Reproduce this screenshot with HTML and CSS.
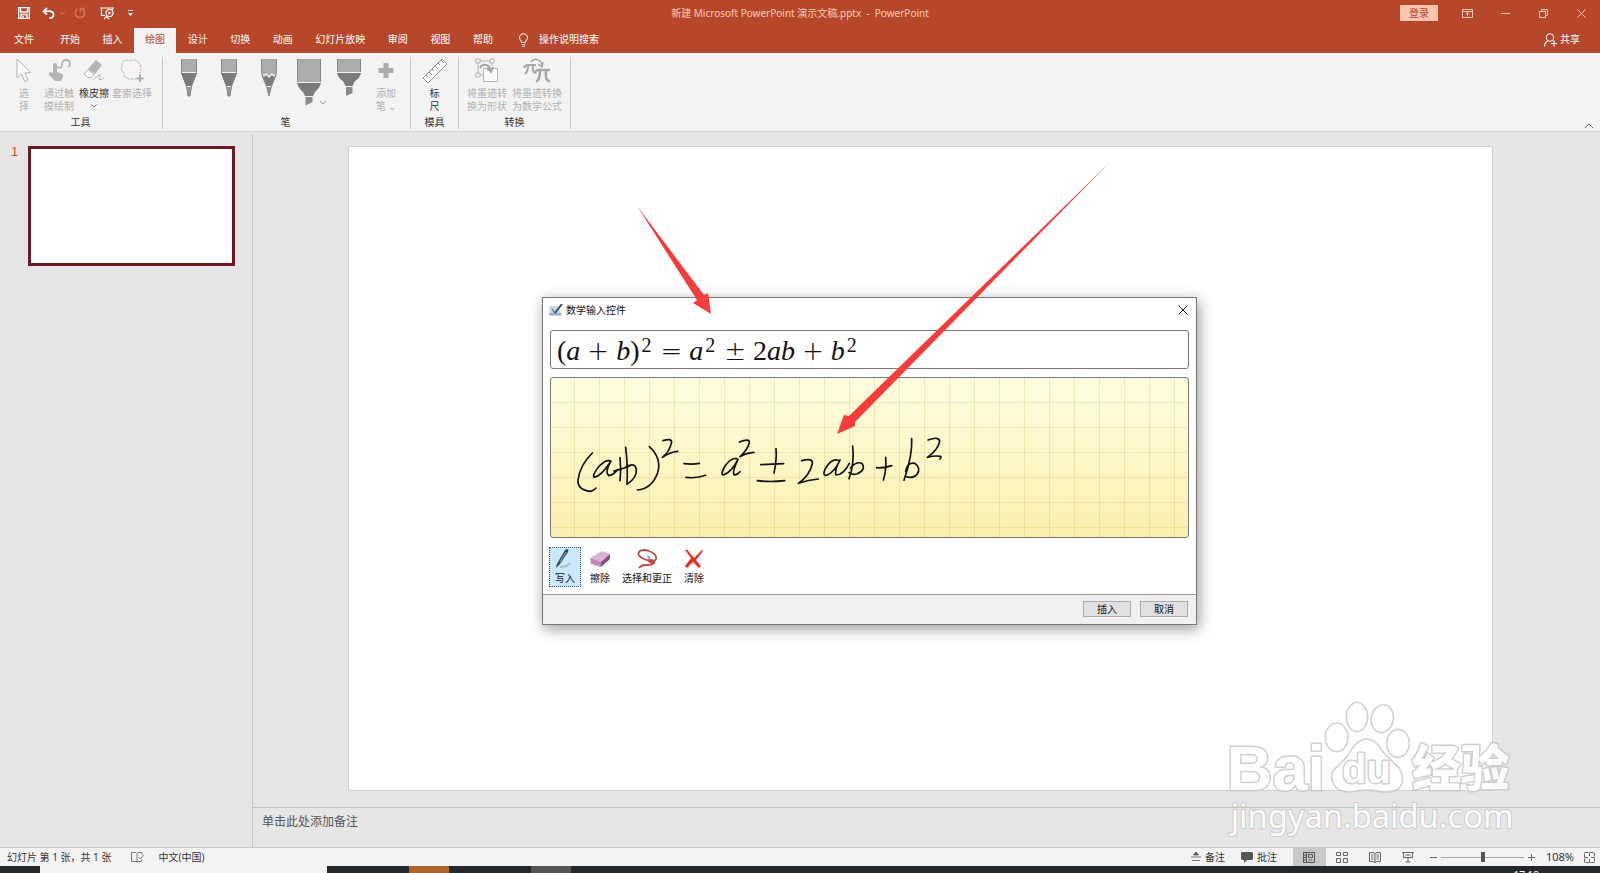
FILE: index.html
```
<!DOCTYPE html>
<html lang="zh-CN">
<head>
    <meta charset="UTF-8">
    <title>新建 Microsoft PowerPoint 演示文稿.pptx - PowerPoint</title>
    <link rel="stylesheet" href="styles.css">
</head>

<body>
<header class="top">
    <div class="titlebar">
        <div class="quick">
            <button aria-label="保存"><svg width="12" height="12" viewBox="0 0 12 12"><path d="M.7.7h10.6v10.6H.7zM2.5 1v4h7V1M3 11V7.5h6V11M5 9v2" fill="none" stroke="#fff" stroke-width="1.3"/></svg></button>
            <button aria-label="撤消"><svg width="24" height="12" viewBox="0 0 24 12"><path d="M5 1L1.5 4.200 5 7.500M2 4.200h5.500q4 .3 4 3.500 0 3-4 3.500" fill="none" stroke="#fff" stroke-width="1.800"/><path d="M18 5l2.300 2.200L22.600 5" fill="none" stroke="#e08f78"/></svg></button>
            <button aria-label="恢复"><svg width="12" height="12" viewBox="0 0 12 12"><path d="M3.500 2A4.700 4.700 0 1 0 8.500 2M6.500 5V1.500h4" fill="none" stroke="#d4745c" stroke-width="1.500"/></svg></button>
            <button aria-label="从头开始"><svg width="15" height="13" viewBox="0 0 15 13"><path d="M0 1h14M1.500 1v7.500H5M12.500 1v2M4 12l2.500-2.500L9 12" fill="none" stroke="#fff" stroke-width="1.200"/><circle cx="9.500" cy="6" r="3.600" fill="none" stroke="#fff" stroke-width="1.200"/><path d="M8.500 4.200v3.600l3-1.800z" fill="#fff"/></svg></button>
            <button aria-label="自定义快速访问工具栏"><svg width="7" height="8" viewBox="0 0 7 8"><path d="M1 1.500h5" stroke="#fff"/><path d="M1 4h5L3.500 7z" fill="#fff"/></svg></button>
        </div>
        <div class="doc-name">新建 Microsoft PowerPoint 演示文稿.pptx &nbsp;-&nbsp; PowerPoint</div>
        <div class="window-buttons">
            <button class="login">登录</button>
            <button class="win" aria-label="功能区显示选项"><svg width="11" height="9" viewBox="0 0 11 9"><path d="M.5.5h10v8H.5zM.5 2.500h10M5.500 7.500v-4M3.500 5.300l2-1.800 2 1.800" fill="none" stroke="#f7c8b8"/></svg></button>
            <button class="win" aria-label="最小化"><svg width="9" height="9" viewBox="0 0 9 9"><path d="M0 4.500h9" stroke="#f7c8b8"/></svg></button>
            <button class="win" aria-label="还原"><svg width="9" height="9" viewBox="0 0 9 9"><path d="M.5 2.500h6v6h-6zM2.500 2.500v-2h6v6h-2" fill="none" stroke="#f7c8b8"/></svg></button>
            <button class="win" aria-label="关闭"><svg width="9" height="9" viewBox="0 0 9 9"><path d="M.5.5l8 8M8.500.5l-8 8" stroke="#f7c8b8"/></svg></button>
        </div>
    </div>

    <nav class="tabs">
        <a class="file" href="#">文件</a>
        <div class="tab-list">
            <a href="#">开始</a>
            <a href="#">插入</a>
            <a class="active" href="#">绘图</a>
            <a href="#">设计</a>
            <a href="#">切换</a>
            <a href="#">动画</a>
            <a href="#">幻灯片放映</a>
            <a href="#">审阅</a>
            <a href="#">视图</a>
            <a href="#">帮助</a>
        </div>
        <a class="tell" href="#"><svg width="11" height="14" viewBox="0 0 11 14"><path d="M3.500 9.500Q3.500 8 2.200 6.800A4 4 0 1 1 8.800 6.800Q7.500 8 7.500 9.500zM3.700 11.500h3.600M4.200 13.300h2.600" fill="none" stroke="#fff"/></svg>操作说明搜索</a>
        <a class="share" href="#"><svg width="13" height="14" viewBox="0 0 13 14"><circle cx="6" cy="4.500" r="3.800" fill="none" stroke="#fff"/><path d="M.5 13.500Q.8 9 4 8M10 7.500v6M7 10.500h6" fill="none" stroke="#fff" stroke-width="1.200"/></svg>共享</a>
    </nav>
</header>

<section class="ribbon">
    <div class="group tools">
        <div class="items">
            <button class="item off"><svg width="18" height="26" viewBox="0 0 18 26"><path d="M2 1v19l4.500-4 3.200 7.500 3.300-1.500-3.200-7 6-.5z" fill="#fafafa" stroke="#b4b4b4"/></svg>选<br>择</button>
            <button class="item off"><svg width="24" height="26" viewBox="0 0 24 26"><path d="M9 8q5 4 6-1 0-5 4-5 4 0 4 4 0 2-2 3" fill="none" stroke="#b4b4b4" stroke-width="1.800"/><path d="M6 7q0-2 2-2t2 2v7l5 2q2 1 1 3l-2 4H8l-6-6q-1-3 2-3l2 1z" fill="#b4b4b4"/></svg>通过触<br>摸绘制</button>
            <button class="item"><svg width="24" height="26" viewBox="0 0 24 26"><path d="M14 2l6 5-7 9-7-5z" fill="#b4b4b4"/><path d="M6 11.500l6 5-2.500 3H6l-4-3.500z" fill="#fafafa" stroke="#b4b4b4"/><path d="M11 22q6-6 7-5 .5 2-1 4 2 2 5-1" fill="none" stroke="#b4b4b4"/></svg>橡皮擦<svg class="caret" width="6" height="4" viewBox="0 0 6 4"><path d="M.5.5L3 3 5.500.5" fill="none" stroke="#777"/></svg></button>
            <button class="item off"><svg width="24" height="26" viewBox="0 0 24 26"><path d="M19 17q4-7 0-12Q15 0 11 3 1 0 2 9q-2 2 2 6 0 6 8 6h4" fill="#f8f3f8" stroke="#b4b4b4" stroke-dasharray="3 1"/><path d="M20 17v7M16.500 20.500h7" stroke="#a6a6a6" stroke-width="1.800"/></svg>套索选择</button>
        </div>
        <div class="caption">工具</div>
    </div>

    <div class="group pens">
        <div class="items">
            <button class="pen" aria-label="钢笔 1"><svg width="16" height="38" viewBox="0 0 16 38"><path d="M0 0h16v13H0z" fill="#acacac"/><path d="M0 14h16l-5 13H5z" fill="#7b7b7b"/><path d="M5.500 28h5L9 37H7z" fill="#999"/><path d="M.5 0v14l5 13L7 37h2l1.500-10 5-13V0" fill="none" stroke="#858585"/></svg></button>
            <button class="pen" aria-label="钢笔 2"><svg width="16" height="38" viewBox="0 0 16 38"><path d="M0 0h16v13H0z" fill="#acacac"/><path d="M0 14h16l-5 13H5z" fill="#7b7b7b"/><path d="M5.500 28h5L9 37H7z" fill="#999"/><path d="M.5 0v14l5 13L7 37h2l1.500-10 5-13V0" fill="none" stroke="#858585"/></svg></button>
            <button class="pen" aria-label="铅笔"><svg width="16" height="38" viewBox="0 0 16 38"><path d="M0 0h16v14l-3 2-2-2-3 3-3-3-2 2-3-2z" fill="#acacac"/><path d="M0 15l3 3 2-2 3 3 3-3 2 2 3-3-5 12H5z" fill="#7b7b7b"/><path d="M5.500 28h5L8 38z" fill="#8e8e8e"/><path d="M.5 0v14l5 13L8 37l2.500-10 5-13V0" fill="none" stroke="#8c8c8c"/></svg></button>
            <button class="pen" aria-label="荧光笔 1"><svg width="34" height="48" viewBox="0 0 34 48"><path d="M5 0h24v23H5z" fill="#acacac"/><path d="M5 24h24q-2 6-6 9l-2 4h-8l-2-4q-4-3-6-9z" fill="#7b7b7b"/><path d="M13.500 38h7v5l-7 3.500z" fill="#8a8a8a"/><path d="M5.500 0v23M28.500 0v23" stroke="#858585"/><path d="M28 42l3 3 3-3" fill="none" stroke="#999"/></svg></button>
            <button class="pen" aria-label="荧光笔 2"><svg width="24" height="38" viewBox="0 0 24 38"><path d="M0 0h24v13H0z" fill="#acacac"/><path d="M0 14h24q-1 5-6 8l-2.500 5h-7L6 22q-5-3-6-8z" fill="#7b7b7b"/><path d="M9 28h6.500v6L9 37z" fill="#8a8a8a"/><path d="M.5 0v13M23.500 0v13" stroke="#858585"/></svg></button>
            <button class="item off"><svg width="16" height="26" viewBox="0 0 16 26"><path d="M5.500 5h5v5h5v5h-5v5h-5v-5h-5v-5h5z" fill="#acacac"/></svg>添加<br>笔 ⌄</button>
        </div>
        <div class="caption">笔</div>
    </div>

    <div class="group stencil">
        <div class="items">
            <button class="item"><svg width="26" height="26" viewBox="0 0 26 26"><path d="M1 20L20 1l5 5L6 25zM4 17l2 2M7 14l3 3M10 11l2 2M13 8l3 3M16 5l2 2M19 2l3 3" fill="#fff" stroke="#8c8c8c"/></svg>标<br>尺</button>
        </div>
        <div class="caption">模具</div>
    </div>

    <div class="group convert">
        <div class="items">
            <button class="item off"><svg width="24" height="26" viewBox="0 0 24 26"><path d="M8 17H3V3h14v5" fill="none" stroke="#b4b4b4"/><path d="M1 1h4v4H1zM15 1h4v4h-4zM1 15h4v4H1z" fill="#f3f3f3" stroke="#b4b4b4"/><path d="M8.500 10.500h14v13h-14z" fill="#fafafa" stroke="#b4b4b4"/><path d="M5 10q2-4 6-3 4 1 5 6M12 10l4 4 2-5" fill="none" stroke="#a6a6a6" stroke-width="2"/></svg>将墨迹转<br>换为形状</button>
            <button class="item off"><svg width="28" height="26" viewBox="0 0 28 26"><path d="M1 10q1-3 4-3h8M5 7q0 7-3 9M10 7q-1 8 3 8" fill="none" stroke="#a6a6a6" stroke-width="2"/><path d="M12 15q1-3 4-3h11M17 12q0 10-4 12M23 12q-1 12 4 11" fill="none" stroke="#a6a6a6" stroke-width="2.500"/><path d="M8 4q3-4 7-2 4 1 4 7M15 6l4 3 1-5" fill="none" stroke="#a6a6a6" stroke-width="1.500"/></svg>将墨迹转换<br>为数学公式</button>
        </div>
        <div class="caption">转换</div>
    </div>
    <button class="collapse" aria-label="折叠功能区"><svg width="10" height="6" viewBox="0 0 10 6"><path d="M1 5l4-4 4 4" fill="none" stroke="#666"/></svg></button>
</section>

<main class="workspace">
    <aside class="slides">
        <span class="number">1</span>
        <button class="thumb" aria-label="幻灯片 1"></button>
    </aside>
    <div class="editor">
        <div class="slide"></div>
        <div class="notes">单击此处添加备注</div>
    </div>
</main>

<footer class="status">
    <span>幻灯片 第 1 张，共 1 张</span>
    <button class="spell" aria-label="拼写检查"><svg width="13" height="11" viewBox="0 0 13 11"><path d="M6 2v8.500M6 9.500H.5v-9H5l1 1 1-1h4v2M6 9.500h4l1-2M7.500 5l2 2 3-4" fill="none" stroke="#777"/></svg></button>
    <span>中文(中国)</span>
    <div class="status-right">
        <button class="label-button"><svg width="10" height="10" viewBox="0 0 10 10"><path d="M5 0l2.500 3h-5zM0 5h10M1 8.500h8" fill="#555" stroke="#555" stroke-width=".8"/></svg>备注</button>
        <button class="label-button"><svg width="12" height="11" viewBox="0 0 12 11"><path d="M1 0h10l1 1v6l-1 1H6l-3 3V8H1L0 7V1z" fill="#555"/></svg>批注</button>
        <div class="views">
            <button class="selected" aria-label="普通视图"><svg width="12" height="11" viewBox="0 0 12 11"><path d="M.5.5h11v10H.5zM3.500.5v10M5.500 2.500h4v3h-4zM5.500 8h4M1 3h2M1 5.500h2M1 8h2" fill="none" stroke="#555"/></svg></button>
            <button aria-label="幻灯片浏览"><svg width="12" height="11" viewBox="0 0 12 11"><path d="M.5.5h4v3h-4zM7.500.5h4v3h-4zM.5 6.500h4v4h-4zM7.500 6.500h4v4h-4z" fill="none" stroke="#666"/></svg></button>
            <button aria-label="阅读视图"><svg width="12" height="11" viewBox="0 0 12 11"><path d="M.5.5H4l2 1 2-1h3.500v9H8l-2 1-2-1H.5zM6 1.500v9M2 3h2.500M2 5h2.500M2 7h2.500M7.500 3H10M7.500 5H10M7.500 7H10" fill="none" stroke="#666"/></svg></button>
            <button aria-label="幻灯片放映"><svg width="12" height="11" viewBox="0 0 12 11"><path d="M0 .5h12M1.500 .5v5h9v-5M6 5.500v4M3.500 10h5M3.500 3h5" fill="none" stroke="#666"/></svg></button>
        </div>
        <button class="zoom-step" aria-label="缩小"><svg width="7" height="7" viewBox="0 0 7 7"><path d="M0 3.500h7" stroke="#666"/></svg></button>
        <input class="zoom" type="range" min="0" max="100" value="51" aria-label="缩放">
        <button class="zoom-step" aria-label="放大"><svg width="7" height="7" viewBox="0 0 7 7"><path d="M0 3.500h7M3.500 0v7" stroke="#666"/></svg></button>
        <span class="percent">108%</span>
        <button class="fit" aria-label="适应窗口"><svg width="11" height="11" viewBox="0 0 11 11"><path d="M.5.5h10v10H.5zM5.500 1v3M5.500 7v3M1 5.500h3M7 5.500h3" fill="none" stroke="#666" stroke-dasharray="4 1"/></svg></button>
    </div>
</footer>

<div class="taskbar">
    <input class="search" type="text" aria-label="搜索">
    <button class="app orange" aria-label="应用 1"></button>
    <button class="app gray" aria-label="应用 2"></button>
    <span class="clock">17:18</span>
</div>

<div class="dialog" role="dialog" aria-labelledby="dialogTitle">
    <div class="dialog-title">
        <svg width="14" height="12" viewBox="0 0 14 12"><path d="M0 2h9l4 9H1z" fill="#c3d9e6"/><path d="M0 9h12v2.500H0z" fill="#8fb0c4"/><path d="M3 5l3 4" fill="none" stroke="#4d6575" stroke-width="1.200"/><path d="M6 9l7-9" stroke="#33434f" stroke-width="1.800"/></svg>
        <span id="dialogTitle">数学输入控件</span>
        <button aria-label="关闭"><svg width="10" height="10" viewBox="0 0 10 10"><path d="M.5.5l9 9M9.500.5l-9 9" stroke="#222"/></svg></button>
    </div>
    <div class="formula">(<i>a</i><span class="op">+</span><i>b</i>)<sup>2</sup><span class="op">=</span><i>a</i><sup>2</sup><span class="op">±</span>2<i>ab</i><span class="op">+</span><i>b</i><sup>2</sup></div>
    <div class="canvas">
        <svg width="400" height="159" viewBox="63 264 1200 477" fill="none" stroke="#111" stroke-width="5" stroke-linecap="round" stroke-linejoin="round">
            <path d="M187 489Q150 525 144 570Q142 600 182 604Q195 600 198 594"/>
            <path d="M243 514Q230 506 208 528Q185 556 192 562Q212 560 241 516Q224 548 236 557Q248 556 264 538"/>
            <path d="M270 503Q274 540 270 572M252 543Q285 534 300 527"/>
            <path d="M287 472Q294 525 291 583Q322 562 319 538Q316 516 288 530"/>
            <path d="M358 470Q396 505 383 548Q366 596 322 600"/>
            <path d="M399 452Q429 443 424 460Q418 485 397 502Q420 486 443 484"/>
            <path d="M462 521Q490 524 508 520M468 562Q500 566 527 556"/>
            <path d="M620 506Q604 502 585 528Q570 555 580 555Q606 545 624 508Q606 545 612 554Q620 557 630 545"/>
            <path d="M628 456Q660 444 658 458Q652 480 630 500Q650 488 672 487"/>
            <path d="M692 524L761 521M738 476Q741 515 732 549M682 572Q720 577 764 572"/>
            <path d="M815 512Q850 502 847 522Q838 558 805 580Q835 570 865 567"/>
            <path d="M925 511Q905 504 886 536Q876 558 890 556Q914 546 930 510Q912 542 918 555Q940 555 958 520"/>
            <path d="M968 468Q974 520 957 566M962 534Q978 513 996 520Q1009 540 980 552Q968 556 957 548"/>
            <path d="M1040 533Q1060 535 1085 527M1067 502Q1070 540 1060 570"/>
            <path d="M1145 446Q1148 495 1122 571M1127 545Q1132 515 1155 520Q1174 534 1161 553Q1147 568 1125 559"/>
            <path d="M1194 450Q1228 438 1229 454Q1224 480 1192 502Q1215 496 1231 499Q1235 501 1230 507"/>
        </svg>
    </div>
    <div class="ink-tools">
        <button class="current"><svg width="20" height="20" viewBox="0 0 20 20"><path d="M5 18q8 0 10-4" fill="none" stroke="#a9c1d2" stroke-width="2"/><path d="M12 0q2 0 1 3L5 15l-4 4q0-3 2-6l7-12z" fill="#34495a"/><path d="M11 3L5 13" stroke="#91a6b5"/></svg>写入</button>
        <button><svg width="20" height="20" viewBox="0 0 20 20"><path d="M0 9L12 2l8 3-8 9z" fill="#dcb0d2"/><path d="M0 9l11 4v5L1 15z" fill="#c486b7"/><path d="M11 13l9-8v5l-9 8z" fill="#8d4f83"/></svg>擦除</button>
        <button><svg width="20" height="20" viewBox="0 0 20 20"><path d="M19 11Q12 13 5 9 -1 5 3 2q4-2 9 0 8 3 7 8-1 3-6 3-3-1 0-2 5 0 4 3-2 2-8 2-5 0-7 3" fill="none" stroke="#bd4c43" stroke-width="1.800"/><path d="M10 6l4 3-3 1z" fill="#999"/></svg>选择和更正</button>
        <button><svg width="20" height="20" viewBox="0 0 20 20"><path d="M1 1q3-1 4 2l5 6 8-8 1 1-7 9 5 6-2 2-6-6-6 6-2-2 6-8z" fill="#dc3327"/></svg>清除</button>
    </div>
    <div class="dialog-buttons">
        <button>插入</button>
        <button>取消</button>
    </div>
</div>

<svg class="arrows" width="480" height="280" viewBox="635 160 480 280">
    <path d="M637 206L704 295L708 293L711 314L693 303L697 300z" fill="#f53b3b"/>
    <path d="M1109 163L855 422L855 426L837 434L844 415L849 416z" fill="#f53b3b"/>
</svg>

<svg class="watermark" width="300" height="160" viewBox="180 0 900 480">
    <g fill="#fff" stroke="#ccc" stroke-width="5">
        <ellipse cx="530" cy="142" rx="34" ry="43"/>
        <ellipse cx="591" cy="81" rx="32" ry="44"/>
        <ellipse cx="667" cy="86" rx="33" ry="42" transform="rotate(12 667 86)"/>
        <ellipse cx="714" cy="160" rx="34" ry="42"/>
        <path d="M620 147Q650 149 668 185Q690 207 718 235Q740 275 713 298Q690 312 650 303Q620 298 590 303Q550 312 528 292Q503 260 525 235Q560 207 577 175Q595 148 620 147z"/>
    </g>
    <g class="brand">
        <text x="200" y="300" font-size="190">Bai</text>
        <text x="546" y="278" font-size="120">du</text>
        <text class="cn" x="756" y="288" font-size="146">经验</text>
        <text class="url" x="212" y="413" font-size="98">jingyan.baidu.com</text>
    </g>
</svg>
</body>
</html>
```
FILE: styles.css
```
* {
    box-sizing: border-box;
}

body {
    margin: 0;
    height: 100vh;
    display: flex;
    flex-direction: column;
    overflow: hidden;
    background-color: #e6e6e6;
    color: #333;
    font-family: "Noto Sans", "Noto Sans CJK SC", sans-serif;
    font-size: 10px;
    line-height: 12px;
}

button {
    margin: 0;
    padding: 0;
    border: 0;
    background: none;
    color: inherit;
    font: inherit;
}

a {
    color: inherit;
    text-decoration: none;
}

svg {
    display: block;
    flex-shrink: 0;
}

/* title bar and tabs */
.top {
    background-color: #b7472a;
    color: #fff;
}

.titlebar {
    height: 28px;
    display: grid;
    grid-template-columns: 1fr auto 1fr;
    align-items: center;
    padding-bottom: 2px;
}

.quick {
    display: flex;
    align-items: center;
    gap: 12px;
    padding-left: 18px;
}

.quick button:nth-child(3) {
    margin-right: 2px;
    margin-left: -4px;
}

.doc-name {
    color: #f9cbbb;
}

.window-buttons {
    display: flex;
    align-items: center;
    justify-content: flex-end;
}

.login {
    width: 38px;
    height: 16px;
    margin-right: 10px;
    background-color: #fcc5b0;
    color: #b7472a;
}

.win {
    width: 38px;
    height: 24px;
    display: flex;
    align-items: center;
    justify-content: center;
}

.tabs {
    height: 25px;
    display: flex;
    line-height: 23px;
}

.file {
    width: 49px;
    padding-left: 14px;
}

.tab-list {
    width: 455px;
    display: flex;
    justify-content: space-between;
}

.tab-list a {
    padding: 0 11px;
}

.tab-list .active {
    background-color: #f3f3f3;
    color: #b7472a;
}

.tell {
    display: flex;
    align-items: center;
    gap: 10px;
    margin-left: 14px;
    padding-bottom: 2px;
}

.share {
    display: flex;
    align-items: center;
    gap: 3px;
    margin-left: auto;
    padding: 0 20px 2px 0;
}

/* ribbon */
.ribbon {
    height: 79px;
    display: flex;
    padding: 4px 0 2px;
    background-color: #f3f3f3;
    border-bottom: 1px solid #d2d2d2;
}

.group {
    display: flex;
    flex-direction: column;
    justify-content: space-between;
    border-right: 1px solid #c8c8c8;
}

.items {
    display: flex;
    align-items: flex-start;
    padding-top: 1px;
}

.item {
    min-width: 34px;
    display: flex;
    flex-direction: column;
    align-items: center;
    line-height: 13px;
}

.item svg {
    margin-bottom: 3px;
}

.item .caret {
    margin: 4px 0 0;
}

.off {
    color: #b1b1b1;
}

.caption {
    text-align: center;
    line-height: 14px;
}

.tools {
    width: 163px;
    padding-left: 7px;
}

.tools .items {
    gap: 1px;
}

.tools .caption {
    padding-right: 8px;
}

.pens {
    width: 248px;
    padding-left: 6px;
}

.pens .caption {
    padding-right: 8px;
}

.pen {
    width: 40px;
    padding-top: 1px;
    display: flex;
    justify-content: center;
}

.stencil {
    width: 48px;
}

.stencil .items {
    justify-content: center;
}

.convert {
    width: 112px;
}

.convert .items {
    justify-content: center;
    gap: 5px;
}

.collapse {
    margin-left: auto;
    padding-right: 6px;
    align-self: flex-end;
}

/* slide list and editor */
.workspace {
    flex: 1;
    display: grid;
    grid-template-columns: 253px 1fr;
    padding-top: 2px;
}

.slides {
    display: flex;
    align-items: flex-start;
    padding: 12px 17px 0 11px;
    border-right: 1px solid #c6c6c6;
}

.number {
    width: 17px;
    color: #c0503a;
    font-family: "Liberation Sans", sans-serif;
    font-size: 13px;
}

.thumb {
    flex: 1;
    aspect-ratio: 207 / 120;
    background-color: #fff;
    border: 3px solid #701820;
}

.editor {
    display: flex;
    flex-direction: column;
}

.slide {
    flex: 1;
    margin: 12px 107px 16px 95px;
    background-color: #fff;
    border: 1px solid #d2d2d2;
}

.notes {
    height: 40px;
    padding: 6px 9px;
    border-top: 1px solid #c3c3c3;
    color: #555;
    font-size: 12px;
    line-height: 16px;
}

/* status bar */
.status {
    height: 19px;
    display: flex;
    align-items: center;
    padding-left: 7px;
    background-color: #f3f3f3;
    border-top: 1px solid #c6c6c6;
}

.spell {
    margin: 0 14px 0 20px;
}

.status-right {
    display: flex;
    align-items: center;
    align-self: stretch;
    margin-left: auto;
    padding-right: 5px;
}

.label-button {
    display: flex;
    align-items: center;
    gap: 4px;
    margin-right: 16px;
}

.views {
    display: flex;
    align-self: stretch;
    margin-right: 5px;
}

.views button {
    width: 33px;
    display: flex;
    align-items: center;
    justify-content: center;
}

.views .selected {
    background-color: #c8c8c8;
}

.zoom {
    width: 83px;
    height: 12px;
    margin: 0 4px;
    appearance: none;
    background: linear-gradient(#aaa, #aaa) center / 100% 1px no-repeat;
}

.zoom::-webkit-slider-thumb {
    width: 4px;
    height: 10px;
    appearance: none;
    background-color: #555;
}

.percent {
    margin: 0 10px 0 11px;
    font-size: 11px;
}

.taskbar {
    height: 7px;
    display: flex;
    padding-left: 40px;
    overflow: hidden;
    background-color: #25282a;
}

.search {
    width: 287px;
    padding: 0;
    border: 0;
    background-color: #f3f3f3;
}

.app {
    width: 40px;
}

.orange {
    margin: 0 82px;
    background-color: #b0642b;
}

.gray {
    background-color: #555;
}

.clock {
    margin: 3px 61px 0 auto;
    color: #fff;
}

/* math input window */
.dialog {
    position: absolute;
    top: 297px;
    left: 542px;
    width: 655px;
    background-color: #fff;
    border: 1px solid #777;
    box-shadow: 2px 4px 14px rgba(0, 0, 0, 0.4);
    color: #111;
}

.dialog-title {
    height: 32px;
    display: flex;
    align-items: center;
    gap: 3px;
    padding: 0 8px 8px 6px;
}

.dialog-title button {
    margin-left: auto;
}

.formula {
    height: 39px;
    margin: 0 7px 8px;
    padding-left: 6px;
    border: 1px solid #777;
    border-radius: 3px;
    font-family: "Liberation Serif", serif;
    font-size: 28px;
    line-height: 40px;
}

.formula sup {
    padding: 0 2px;
    font-size: 20px;
    line-height: 0;
    vertical-align: 8px;
}

.formula .op {
    padding: 0 7px;
    font-family: "DejaVu Sans", sans-serif;
    font-size: 26px;
    line-height: 0;
    font-weight: 200;
}

.canvas {
    height: 161px;
    margin: 0 7px;
    border: 1px solid #777;
    border-radius: 3px;
    background:
        linear-gradient(to right, rgba(190, 160, 60, 0.22) 1px, transparent 1px) 23px 0 / 25px 25px,
        linear-gradient(rgba(190, 160, 60, 0.18) 1px, transparent 1px) 0 24px / 25px 25px,
        linear-gradient(#fffde0, #fbefaf);
}

.ink-tools {
    height: 56px;
    display: flex;
    align-items: flex-start;
    padding: 9px 6px;
}

.ink-tools button {
    height: 40px;
    display: flex;
    flex-direction: column;
    align-items: center;
    gap: 3px;
    padding: 1px 5px;
    border: 1px dotted transparent;
}

.ink-tools .current {
    margin-right: 3px;
    background-color: #cce8ff;
    border-color: #35597a;
}

.dialog-buttons {
    height: 30px;
    display: flex;
    justify-content: flex-end;
    gap: 9px;
    padding: 6px 8px;
    background-color: #f0f0f0;
    border-top: 1px solid #999;
}

.dialog-buttons button {
    width: 48px;
    height: 16px;
    background-color: #e1e1e1;
    border: 1px solid #adadad;
}

/* overlays */
.arrows {
    position: absolute;
    top: 160px;
    left: 635px;
    pointer-events: none;
}

.watermark {
    position: absolute;
    right: 80px;
    bottom: 23px;
    opacity: 0.85;
    pointer-events: none;
}

.brand {
    fill: #fff;
    stroke: #c8c8c8;
    stroke-width: 9px;
    stroke-linejoin: round;
    paint-order: stroke;
    font-family: "Liberation Sans", sans-serif;
    font-weight: bold;
}

.brand .cn {
    font-family: "Noto Sans CJK SC", sans-serif;
    font-weight: 900;
}

.brand .url {
    stroke-width: 6px;
    font-family: "Noto Sans", sans-serif;
    font-weight: normal;
}
```
